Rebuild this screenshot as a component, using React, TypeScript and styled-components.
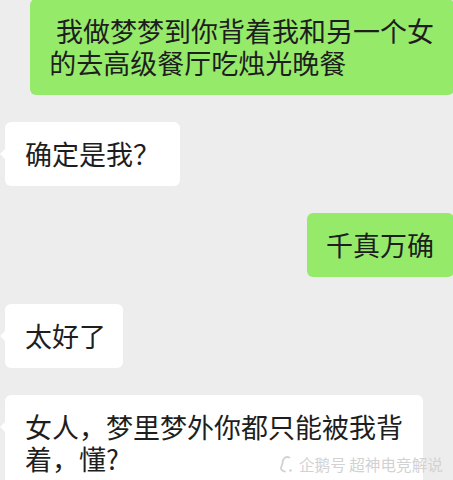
import React from "react";
import styled, { createGlobalStyle } from "styled-components";

const GlobalStyle = createGlobalStyle`
  html, body {
    margin: 0;
    padding: 0;
    background: #ededed;
    overflow: hidden;
  }
  body {
    font-family: "Noto Sans CJK SC", "Noto Sans", sans-serif;
  }
`;

const Screen = styled.div`
  position: relative;
  width: 453px;
  height: 480px;
  overflow: hidden;
  background: #ededed;
`;

const Thread = styled.div`
  display: flex;
  flex-direction: column;
  gap: 27px;
  margin-top: -1px;
  padding: 0 0 0 5px;
`;

const Row = styled.div<{ $mine?: boolean }>`
  display: flex;
  justify-content: ${(p) => (p.$mine ? "flex-end" : "flex-start")};
  margin-right: ${(p) => (p.$mine ? "-1px" : "0")};
`;

const Bubble = styled.div<{ $mine?: boolean; $pr?: number }>`
  position: relative;
  box-sizing: border-box;
  background: ${(p) => (p.$mine ? "#95ea6a" : "#ffffff")};
  color: #1e1e1e;
  border-radius: 6px;
  padding: 16px ${(p) => p.$pr ?? 20}px 16px ${(p) => (p.$mine ? 19 : 20)}px;
  font-size: 27px;
  line-height: 32px;
  letter-spacing: 0;
  white-space: pre;

  &::before {
    content: "";
    position: absolute;
    top: 26px;
    ${(p) => (p.$mine ? "right: -6px;" : "left: -5px;")}
    width: 0;
    height: 0;
    border-top: 6px solid transparent;
    border-bottom: 6px solid transparent;
    ${(p) =>
      p.$mine
        ? "border-left: 6px solid #95ea6a;"
        : "border-right: 6px solid #ffffff;"}
  }
`;

const Line = styled.span`
  display: block;
`;

const Watermark = styled.div`
  position: absolute;
  left: 280px;
  top: 455px;
  display: flex;
  align-items: center;
  gap: 5px;
  color: #d2d2d2;
  font-size: 15.6px;
  line-height: 18px;
  white-space: nowrap;
`;

const PenguinIcon = () => (
  <svg width="14" height="18" viewBox="0 0 14 18" fill="none">
    <path
      d="M9.5 2.5C6 1 2.5 3.5 2.6 7.5c0 2-1.6 3.6-1.6 5.6 0 1.8 1.6 3 3.8 3.4"
      stroke="#d2d2d2"
      strokeWidth="1.8"
      strokeLinecap="round"
    />
    <circle cx="10.5" cy="15.5" r="1.3" fill="#d2d2d2" />
  </svg>
);

export default function App() {
  return (
    <Screen>
      <GlobalStyle />
      <Thread>
        <Row $mine>
          <Bubble $mine $pr={20}>
            <Line>{"\u2005我做梦梦到你背着我和另一个女"}</Line>
            <Line>的去高级餐厅吃烛光晚餐</Line>
          </Bubble>
        </Row>
        <Row>
          <Bubble $pr={20}>确定是我？</Bubble>
        </Row>
        <Row $mine>
          <Bubble $mine $pr={20}>千真万确</Bubble>
        </Row>
        <Row>
          <Bubble $pr={17}>太好了</Bubble>
        </Row>
        <Row>
          <Bubble $pr={20}>
            <Line>女人，梦里梦外你都只能被我背</Line>
            <Line>着，懂?</Line>
          </Bubble>
        </Row>
      </Thread>
      <Watermark>
        <PenguinIcon />
        <span>企鹅号 超神电竞解说</span>
      </Watermark>
    </Screen>
  );
}
